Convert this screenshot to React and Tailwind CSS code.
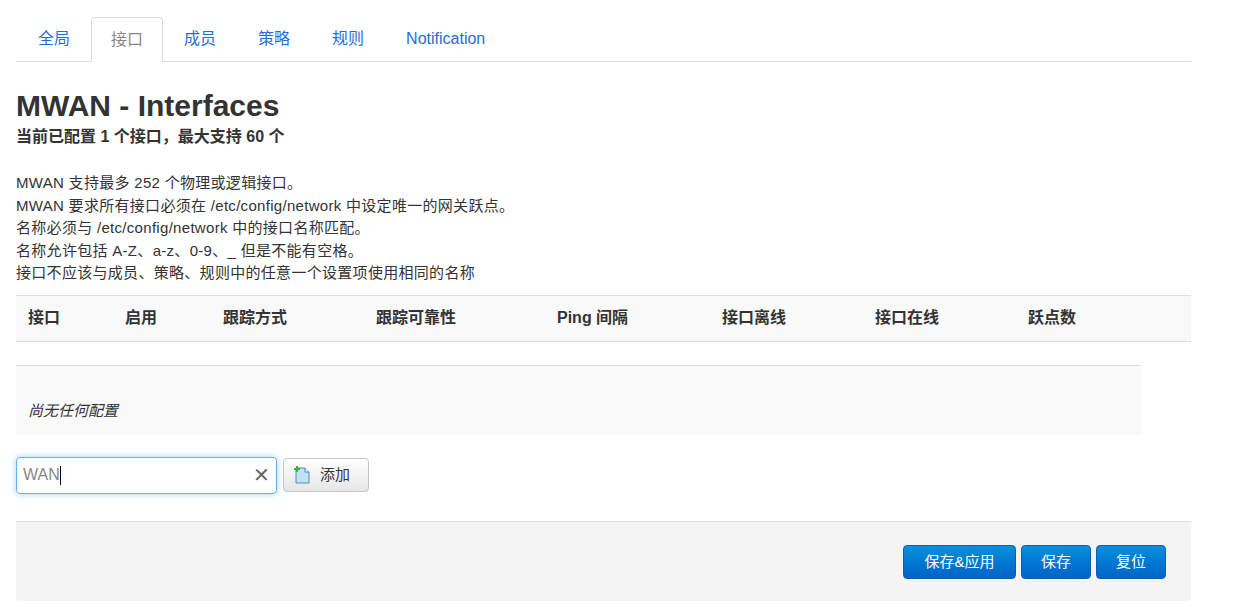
export default function App() {
  const f = { fontFamily: '"Liberation Sans", "Noto Sans CJK SC", sans-serif' };
  const cols = [
    ["接口", "w-[97px]"], ["启用", "w-[98px]"], ["跟踪方式", "w-[153px]"], ["跟踪可靠性", "w-[181px]"],
    ["Ping 间隔", "w-[165px]"], ["接口离线", "w-[153px]"], ["接口在线", "w-[153px]"], ["跃点数", "w-[100px]"],
  ];
  const btn = "h-[34px] rounded border border-[#0a5fb0] bg-gradient-to-b from-[#0b8fdc] to-[#0063c6] text-white text-[15px]";
  return (
    <div style={f} className="bg-white text-[#333] w-[1238px] h-[612px] overflow-hidden">
      <div className="ml-4 w-[1175px] pt-[17px]">
        <div className="flex h-[45px] border-b border-[#ddd] pl-[1px] text-[16px]">
          {["全局", "接口", "成员", "策略", "规则", "Notification"].map((t, i) =>
            i === 1 ? (
              <div key={t} className="px-[19px] mb-[-1px] h-[45px] flex items-center border border-[#ddd] border-b-white rounded-t bg-white text-[#888]">{t}</div>
            ) : (
              <div key={t} className="px-[19px] mx-[2px] h-[44px] flex items-center text-[#1f6fd6]">{t}</div>
            )
          )}
        </div>
        <h1 className="text-[30px] font-bold mt-[27px] leading-[34px] text-[#333]">MWAN - Interfaces</h1>
        <div className="text-[16px] font-bold mt-[3px] leading-[22px]">当前已配置 1 个接口，最大支持 60 个</div>
        <div className="text-[15px] tracking-[0.3px] leading-[22.5px] mt-[24px]">
          <div>MWAN 支持最多 252 个物理或逻辑接口。</div>
          <div>MWAN 要求所有接口必须在 /etc/config/network 中设定唯一的网关跃点。</div>
          <div>名称必须与 /etc/config/network 中的接口名称匹配。</div>
          <div>名称允许包括 A-Z、a-z、0-9、_ 但是不能有空格。</div>
          <div>接口不应该与成员、策略、规则中的任意一个设置项使用相同的名称</div>
        </div>
        <div className="mt-[10px] flex h-[47px] items-center bg-[#f9f9f9] border-y border-[#ddd] pl-[12px] text-[16px] font-bold">
          {cols.map(([t, w]) => <div key={t} className={w}>{t}</div>)}
        </div>
        <div className="mt-[23px] w-[1125px] h-[70px] bg-[#f9f9f9] border-t border-[#ddd] flex items-end pb-[12px] pl-[12px] italic text-[15px]">尚无任何配置</div>
        <div className="mt-[22px] flex items-center gap-[6px]">
          <div className="w-[261px] h-[37px] border border-[#66afe9] rounded shadow-[0_0_6px_rgba(102,175,233,0.6)] flex items-center px-[6px] text-[16px] text-[#888]">
            <span>WAN</span><span className="w-px h-[19px] bg-black"></span>
            <span className="ml-auto text-[#666] text-[20px] leading-none">✕</span>
          </div>
          <button className="w-[86px] h-[34px] rounded border border-[#c5c5c5] bg-gradient-to-b from-white to-[#e6e6e6] flex items-center px-[8px] gap-[8px] text-[15px] text-[#333]">
            <svg width="20" height="20" viewBox="0 0 20 20">
              <path d="M4 3h9l4 4v11H4z" fill="#bfe0f5" stroke="#4a90c0" strokeWidth="1" />
              <path d="M13 3v4h4" fill="#e8f4fb" stroke="#4a90c0" strokeWidth="1" />
              <path d="M5 1v6M2 4h6" stroke="#3cb33c" strokeWidth="2.2" />
            </svg>
            添加
          </button>
        </div>
        <div className="mt-[27px] h-[80px] bg-[#f4f4f4] border-t border-[#ddd] rounded-b flex justify-end items-center gap-[5px] pr-[25px] pt-[2px]">
          <button className={btn + " w-[113px]"}>保存&amp;应用</button>
          <button className={btn + " w-[70px]"}>保存</button>
          <button className={btn + " w-[70px]"}>复位</button>
        </div>
      </div>
    </div>
  );
}
